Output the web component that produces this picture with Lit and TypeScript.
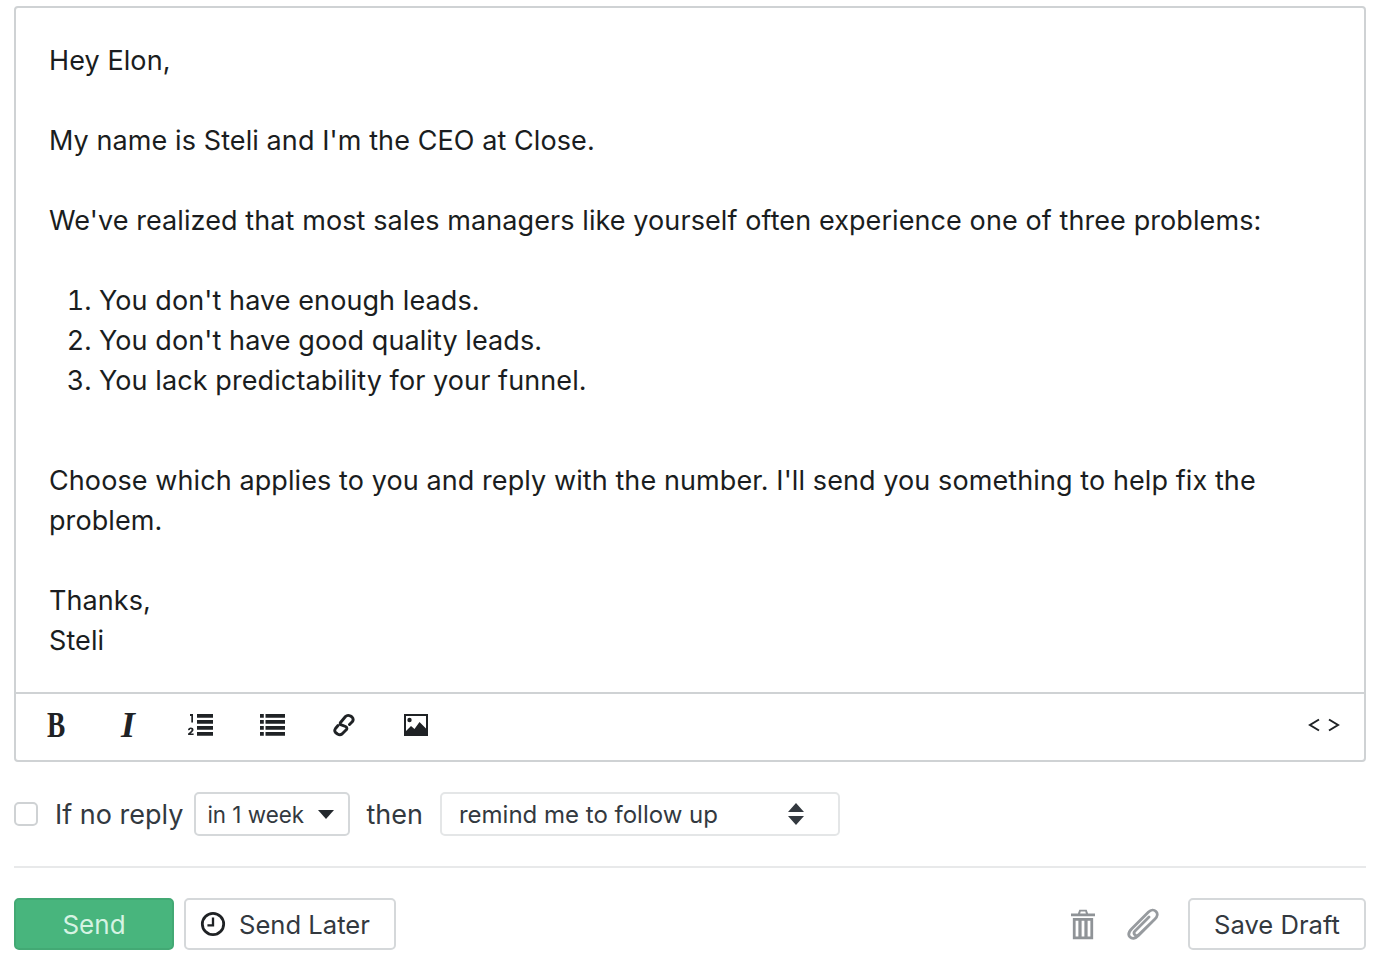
import { LitElement, html, css } from "lit";
import { customElement } from "lit/decorators.js";

@customElement("app-root")
export class AppRoot extends LitElement {
  static styles = css`
    :host {
      display: block;
      box-sizing: border-box;
      width: 1380px;
      height: 958px;
      padding: 6px 14px 0;
      background: #fff;
      color: #23282d;
      font-family: Inter, "Liberation Sans", sans-serif;
      overflow: hidden;
    }
    .editor {
      border: 2px solid #cfd2d4;
      border-radius: 4px;
      height: 756px;
      box-sizing: border-box;
      display: flex;
      flex-direction: column;
    }
    .body {
      flex: 1;
      min-height: 0;
      padding: 33px 33px 0;
      font-size: 27px;
      line-height: 40px;
      color: #1a1d20;
      letter-spacing: 0.09px;
    }
    .body p { margin: 0 0 40px; }
    .body ol { margin: 0 0 60px; padding: 0 0 0 50px; }
    .body .sign { margin: 0; }
    .toolbar {
      height: 68px;
      border-top: 2px solid #cfd2d4;
      display: flex;
      align-items: center;
      padding: 0 24px 4px 28px;
      gap: 48px;
      flex: none;
      box-sizing: border-box;
    }
    .tool { width: 24px; height: 28px; display: flex; align-items: center; justify-content: center; color: #1f2225; }
    .tool svg { display: block; flex: none; }
    .b, .i { font-family: "Liberation Serif", serif; font-weight: 700; font-size: 36px; line-height: 28px; }
    .b span { display: block; transform: scaleX(0.76); }
    .i { font-style: italic; }
    .spacer { flex: 1; }
    .rule-row {
      height: 104px;
      display: flex;
      align-items: center;
      font-size: 27px;
      color: #33393f;
    }
    .check {
      width: 24px;
      height: 24px;
      border: 2px solid #cfd2d4;
      border-radius: 5px;
      box-sizing: border-box;
      margin-right: 17px;
      background: #fff;
    }
    .sel {
      height: 44px;
      box-sizing: border-box;
      border: 2px solid #d5d8da;
      border-radius: 5px;
      display: flex;
      align-items: center;
      color: #33393f;
      background: #fff;
    }
    .sel.small { width: 156px; margin: 0 16px 0 11px; padding: 0 14px 0 11px; font-size: 22.4px; justify-content: space-between; }
    .sel.wide { width: 400px; margin-left: 17px; padding: 0 34px 0 17px; font-size: 24px; justify-content: space-between; border-color: #e4e6e7; }
    .divider { height: 2px; background: #e8e9ea; }
    .actions {
      display: flex;
      align-items: center;
      padding-top: 30px;
    }
    .btn {
      height: 52px;
      box-sizing: border-box;
      border: 2px solid #d5d8da;
      border-radius: 5px;
      display: flex;
      align-items: center;
      justify-content: center;
      font: inherit;
      font-size: 26px;
      color: #33393f;
      background: #fff;
      padding: 0;
    }
    .send { width: 160px; background: #48b57d; border-color: #43a974; color: #d6f3e3; }
    .later { width: 212px; margin-left: 10px; gap: 13px; justify-content: flex-start; padding-left: 14px; font-size: 25.6px; }
    .draft { width: 178px; font-size: 25.6px; }
    .trash { margin-right: 31px; }
    .clip { margin-right: 28px; }
  `;

  render() {
    return html`
      <div class="editor">
        <div class="body">
          <p>Hey Elon,</p>
          <p>My name is Steli and I'm the CEO at Close.</p>
          <p>We've realized that most sales managers like yourself often experience one of three problems:</p>
          <ol>
            <li>You don't have enough leads.</li>
            <li>You don't have good quality leads.</li>
            <li>You lack predictability for your funnel.</li>
          </ol>
          <p>Choose which applies to you and reply with the number. I'll send you something to help fix the problem.</p>
          <p class="sign">Thanks,<br />Steli</p>
        </div>
        <div class="toolbar">
          <div class="tool b"><span>B</span></div>
          <div class="tool i">I</div>
          <div class="tool">
            <svg width="26" height="24" viewBox="0 0 26 24" fill="currentColor">
              <path d="M3 1h3v8.500H4.300V3H3zM1 17.200c0-1.800 1.300-2.700 2.800-2.700 1.600 0 2.700.9 2.700 2.200 0 1.400-1 2.300-2.900 3.700h3v1.600H1.100v-1.400c2.500-2 3.500-2.800 3.500-3.800 0-.5-.3-.8-.8-.8-.5 0-.9.3-.9 1z"/>
              <path d="M10 1h16v3.800H10zM10 7h16v3.800H10zM10 13h16v3.800H10zM10 19h16v3.800H10z" />
            </svg>
          </div>
          <div class="tool">
            <svg width="26" height="24" viewBox="0 0 26 24" fill="currentColor">
              <path d="M1 1h3.800v3.800H1zM1 7h3.800v3.800H1zM1 13h3.800v3.800H1zM1 19h3.800v3.800H1z"/>
              <path d="M6.500 1H26v3.800H6.500zM6.500 7H26v3.800H6.500zM6.500 13H26v3.800H6.500zM6.500 19H26v3.800H6.500z"/>
            </svg>
          </div>
          <div class="tool">
            <svg width="24" height="24" viewBox="0 0 24 24" fill="none" stroke="currentColor" stroke-width="2.900" stroke-linecap="round" stroke-linejoin="round">
              <path d="M17.500 11.500L20.500 8.500Q22 6 20 4L18.500 3Q15.500 1.500 13.500 3.500L8.500 9.500Q7.500 11.500 10 12.200L13.500 13.500Q15.500 14.500 14.500 16.500L10 21Q8 22.500 5.500 21L3.500 19.500Q2 17.500 3.500 15.500L6 12.500"/>
            </svg>
          </div>
          <div class="tool">
            <svg width="24" height="22" viewBox="0 0 24 22">
              <path fill="#1f2225" fill-rule="evenodd" d="M0 0h24v22H0zM2 2v15l5-5 3.500 3 5-7 6.500 6.500V2z"/>
              <circle cx="5.500" cy="6" r="2.200" fill="#1f2225"/>
            </svg>
          </div>
          <div class="spacer"></div>
          <svg width="32" height="14" viewBox="0 0 32 14" fill="none" stroke="#1f2225" stroke-width="2">
            <path d="M11 1.500L2 7l9 5.500M21 1.500L30 7l-9 5.500"/>
          </svg>
        </div>
      </div>

      <div class="rule-row">
        <div class="check"></div>
        <span>If no reply</span>
        <div class="sel small">
          <span>in 1 week</span>
          <svg width="16" height="9" viewBox="0 0 16 9"><path d="M0 0h16L8 9z" fill="#23282d"/></svg>
        </div>
        <span>then</span>
        <div class="sel wide">
          <span>remind me to follow up</span>
          <svg width="16" height="24" viewBox="0 0 16 24" fill="#33393f"><path d="M8 1l8 9H0zM8 23l8-9H0z"/></svg>
        </div>
      </div>
      <div class="divider"></div>
      <div class="actions">
        <button class="btn send">Send</button>
        <button class="btn later">
          <svg width="26" height="26" viewBox="0 0 28 28" fill="none" stroke="#1f2225" stroke-width="3">
            <circle cx="14" cy="14" r="11.500"/>
            <path d="M14 7v8.500H8" stroke-width="2.500"/>
          </svg>
          <span>Send Later</span>
        </button>
        <div class="spacer"></div>
        <svg class="trash" width="24" height="31" viewBox="0 0 26 32" fill="#8f9397">
          <path fill-rule="evenodd" d="M9 0h8l1.500 4H26v3H0V4h7.500zM10.500 2l-.6 2h6.200l-.6-2zM2 9h22v23H2zM5 12v17h3V12zM11.500 12v17h3V12zM18 12v17h3V12z"/>
        </svg>
        <svg class="clip" width="34" height="32" viewBox="0 0 34 32" fill="none" stroke="#979b9f" stroke-width="2.800" stroke-linecap="round" stroke-linejoin="round">
          <path d="M23 9L9 23c-1.500 1.500-1 3 0 4s2.500 1 4-.5L29 11c2.500-2.500 3-5.500 1-7.500S25 1.500 22.500 4L6 20.500c-3.500 3.500-4 6.500-2 8.500s5 2 8.500-1.500L26 14"/>
        </svg>
        <button class="btn draft">Save Draft</button>
      </div>
    `;
  }
}
